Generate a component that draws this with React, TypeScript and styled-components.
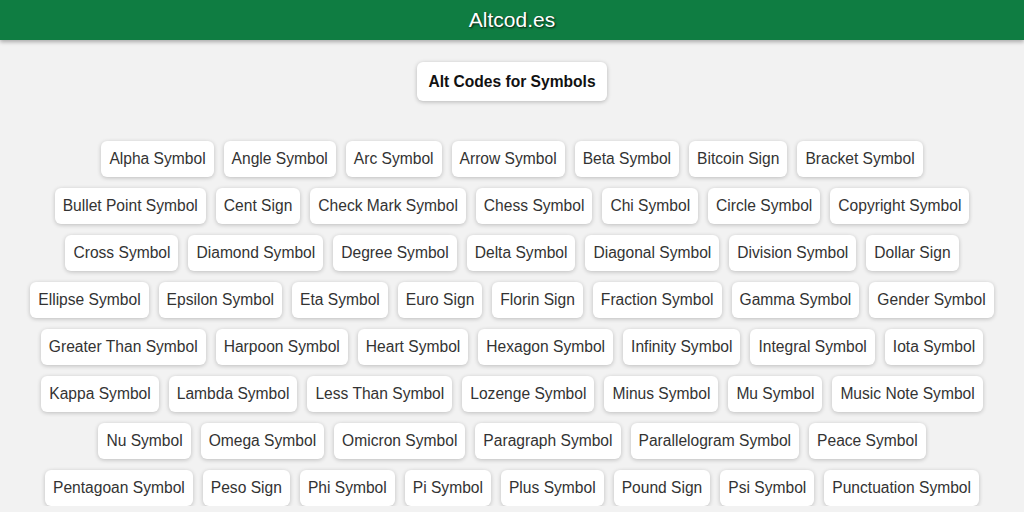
import React from 'react'
import styled, { createGlobalStyle } from 'styled-components'

const GlobalStyle = createGlobalStyle`
    html, body {
        margin: 0;
        padding: 0;
        background: #f2f2f2;
        font-family: 'Liberation Sans', Arial, sans-serif;
    }
`

const Header = styled.header`
    height: 40px;
    background: #0f7d42;
    display: flex;
    align-items: center;
    justify-content: center;
    box-shadow: 0 2px 4px rgba(0, 0, 0, 0.3);
`

const SiteTitle = styled.h1`
    margin: 0;
    color: #ffffff;
    font-size: 21px;
    font-weight: normal;
    text-shadow: 1px 1px 2px rgba(0, 0, 0, 0.8);
`

const Main = styled.main`
    display: flex;
    flex-direction: column;
    align-items: center;
    padding-top: 22px;
`

const PageTitle = styled.h2`
    margin: 0;
    height: 39px;
    padding: 0 11px;
    display: flex;
    align-items: center;
    background: #ffffff;
    border-radius: 6px;
    box-shadow: 0 1px 4px rgba(0, 0, 0, 0.25);
    color: #111111;
    font-size: 15.6px;
    font-weight: bold;
`

const ChipList = styled.div`
    display: flex;
    flex-wrap: wrap;
    justify-content: center;
    gap: 11px 10px;
    width: 972px;
    margin-top: 40px;
`

const Chip = styled.a`
    height: 36px;
    padding: 0 8px;
    display: flex;
    align-items: center;
    background: #ffffff;
    border-radius: 6px;
    box-shadow: 0 1px 4px rgba(0, 0, 0, 0.22);
    color: #333333;
    font-size: 15.6px;
    text-decoration: none;
    white-space: nowrap;
`

const symbols = [
    'Alpha Symbol', 'Angle Symbol', 'Arc Symbol', 'Arrow Symbol', 'Beta Symbol', 'Bitcoin Sign', 'Bracket Symbol',
    'Bullet Point Symbol', 'Cent Sign', 'Check Mark Symbol', 'Chess Symbol', 'Chi Symbol', 'Circle Symbol', 'Copyright Symbol',
    'Cross Symbol', 'Diamond Symbol', 'Degree Symbol', 'Delta Symbol', 'Diagonal Symbol', 'Division Symbol', 'Dollar Sign',
    'Ellipse Symbol', 'Epsilon Symbol', 'Eta Symbol', 'Euro Sign', 'Florin Sign', 'Fraction Symbol', 'Gamma Symbol', 'Gender Symbol',
    'Greater Than Symbol', 'Harpoon Symbol', 'Heart Symbol', 'Hexagon Symbol', 'Infinity Symbol', 'Integral Symbol', 'Iota Symbol',
    'Kappa Symbol', 'Lambda Symbol', 'Less Than Symbol', 'Lozenge Symbol', 'Minus Symbol', 'Mu Symbol', 'Music Note Symbol',
    'Nu Symbol', 'Omega Symbol', 'Omicron Symbol', 'Paragraph Symbol', 'Parallelogram Symbol', 'Peace Symbol',
    'Pentagoan Symbol', 'Peso Sign', 'Phi Symbol', 'Pi Symbol', 'Plus Symbol', 'Pound Sign', 'Psi Symbol', 'Punctuation Symbol',
]

const App = () => {
    return (
        <>
            <GlobalStyle />
            <Header>
                <SiteTitle>Altcod.es</SiteTitle>
            </Header>
            <Main>
                <PageTitle>Alt Codes for Symbols</PageTitle>
                <ChipList>
                    {symbols.map((name) => (
                        <Chip key={name} href="#">{name}</Chip>
                    ))}
                </ChipList>
            </Main>
        </>
    )
}

export default App
